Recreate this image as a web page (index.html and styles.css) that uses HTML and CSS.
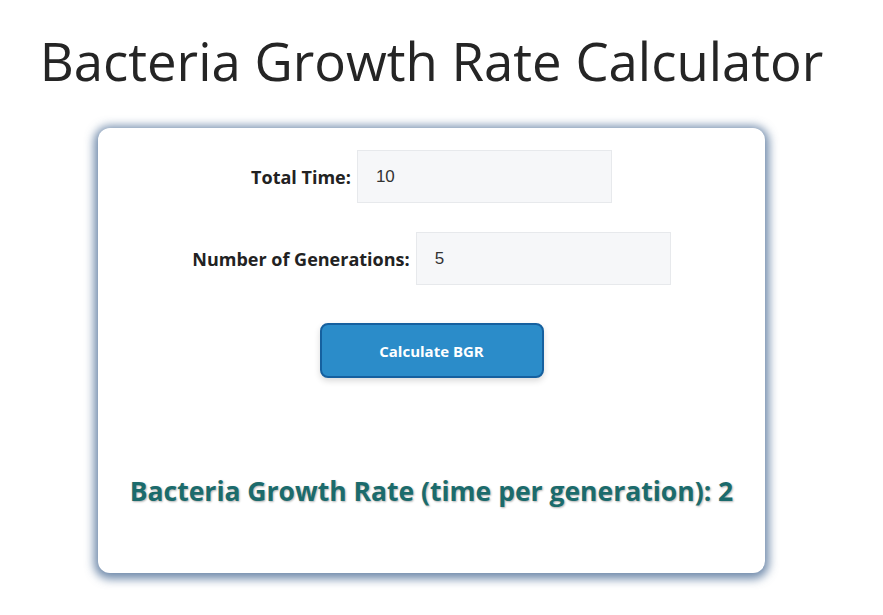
FILE: index.html
```html
<!DOCTYPE html>
<html lang="en">
<head>
    <meta charset="UTF-8">
    <meta name="viewport" content="width=device-width, initial-scale=1.0">
    <title>Bacteria Growth Rate Calculator</title>
    <link rel="stylesheet" href="styles.css">
</head>
<body>

<h1>Bacteria Growth Rate Calculator</h1>

<div id="calculator">
    <div class="form-row">
        <label for="total-time">Total Time:</label>
        <input type="number" id="total-time" value="10">
    </div>

    <div class="form-row">
        <label for="generations">Number of Generations:</label>
        <input type="number" id="generations" value="5">
    </div>

    <button id="calc-btn" onclick="calculateBGR()">Calculate BGR</button>

    <h2 id="result">Bacteria Growth Rate (time per generation): 2</h2>
</div>

<script>
    // Calcola il tempo per generazione
    function calculateBGR() {
        const time = parseFloat(document.getElementById('total-time').value);
        const gens = parseFloat(document.getElementById('generations').value);
        if (!gens) return;
        document.getElementById('result').textContent = "Bacteria Growth Rate (time per generation): " + (time / gens);
    }
</script>

</body>
</html>
```

FILE: styles.css
```css
body {
    margin: 0;
    padding: 0 20px 40px 0;
    font-family: "Open Sans", "Noto Sans", sans-serif;
    background-color: #fff;
    color: #222;
    text-align: center;
}

h1 {
    font-size: 52.7px;
    font-weight: 400;
    margin: 0;
    padding-top: 26px;
    height: 102px;
    line-height: 70px;
    color: #252525;
}

#calculator {
    width: 667px;
    box-sizing: border-box;
    margin: 0 auto;
    padding: 22px 20px 0;
    height: 445px;
    background-color: #fff;
    border-radius: 12px;
    box-shadow: 0 2px 10px 4px rgba(60, 95, 140, 0.72);
}

.form-row {
    display: flex;
    justify-content: center;
    align-items: center;
    gap: 6px;
    margin-bottom: 29px;
}

label {
    font-size: 18px;
    font-weight: 700;
    color: #222;
}

input {
    width: 255px;
    height: 53px;
    box-sizing: border-box;
    padding: 0 18px;
    font-family: "Liberation Sans", Arial, sans-serif;
    font-size: 17px;
    color: #333;
    background-color: #f6f7f9;
    border: 1px solid #e7e9ec;
    outline: none;
    -moz-appearance: textfield;
}

input::-webkit-inner-spin-button {
    -webkit-appearance: none;
}

#calc-btn {
    display: block;
    margin: 38px auto 0;
    width: 224px;
    height: 55px;
    font-family: "Open Sans", sans-serif;
    font-size: 15px;
    font-weight: 700;
    color: #fff;
    background-color: #2b8cc9;
    border: 2px solid #15609f;
    border-radius: 8px;
    box-shadow: 0 3px 6px rgba(0, 0, 0, 0.15);
    cursor: pointer;
}

#result {
    margin: 95px 0 0;
    font-size: 26.5px;
    font-weight: 700;
    line-height: 36px;
    color: #1b6b6c;
    text-shadow: 1px 1px 2px rgba(0, 0, 0, 0.3);
}
```
